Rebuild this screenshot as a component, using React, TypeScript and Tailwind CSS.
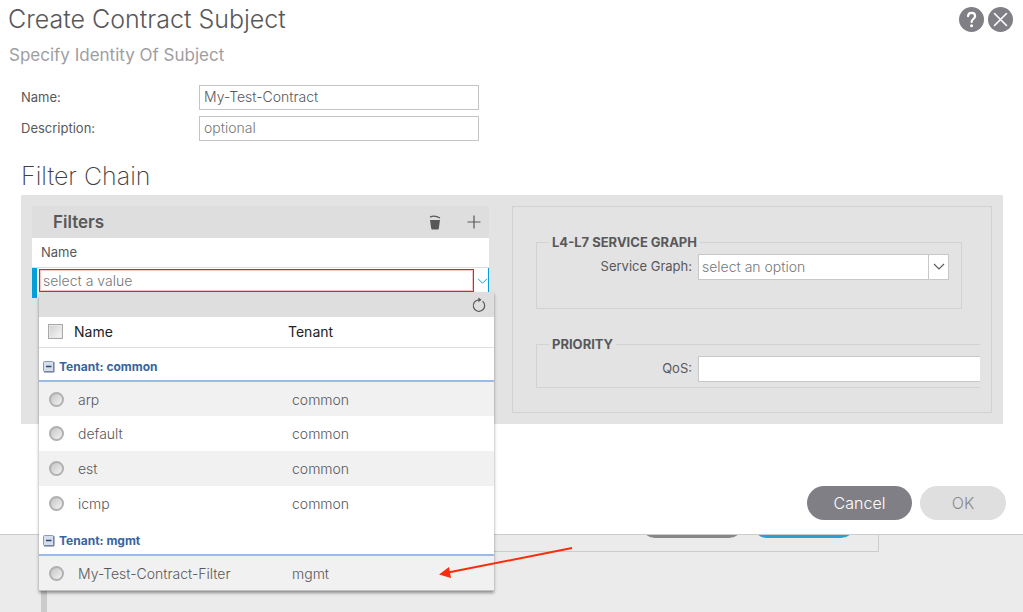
import React, { useState } from 'react';

interface FilterItem {
    name: string;
    tenant: string;
}

interface FilterGroup {
    tenant: string;
    items: FilterItem[];
}

const filterGroups: FilterGroup[] = [
    {
        tenant: "common",
        items: [
            { name: "arp", tenant: "common" },
            { name: "default", tenant: "common" },
            { name: "est", tenant: "common" },
            { name: "icmp", tenant: "common" },
        ],
    },
    {
        tenant: "mgmt",
        items: [{ name: "My-Test-Contract-Filter", tenant: "mgmt" }],
    },
];

const Chevron = ({ className }: { className: string }) => (
    <svg viewBox="0 0 12 8" fill="none" stroke="currentColor" strokeWidth="1.1" className={className}>
        <path d="M1 1l5 5 5-5" />
    </svg>
);

const DialogHeader = () => (
    <header className="flex items-start justify-between pl-2 pr-[10px] pt-1">
        <div>
            <h1 className="text-[25px] leading-[30px] font-light text-[#58585b]">Create Contract Subject</h1>
            <p className="mt-[10px] pl-px text-[17px] leading-[22px] text-[#9e9ea2]">Specify Identity Of Subject</p>
        </div>
        <div className="flex gap-1 pt-[3px]">
            <button type="button" aria-label="Help" className="h-[25px] w-[25px]">
                <svg viewBox="0 0 25 25" fill="none" className="h-full w-full">
                    <circle cx="12.5" cy="12.5" r="12.5" fill="#807f85" />
                    <path d="M9 9.2c.2-2.2 1.6-3.3 3.6-3.3s3.5 1.2 3.5 3.2c0 2.9-3.5 2.9-3.5 5.9" stroke="#fff" strokeWidth="2.2" strokeLinecap="round" />
                    <circle cx="12.6" cy="18.8" r="1.5" fill="#fff" />
                </svg>
            </button>
            <button type="button" aria-label="Close" className="h-[25px] w-[25px]">
                <svg viewBox="0 0 25 25" fill="none" className="h-full w-full">
                    <circle cx="12.5" cy="12.5" r="12.5" fill="#807f85" />
                    <path d="M6.5 6.5l12 12M18.5 6.5l-12 12" stroke="#fff" strokeWidth="1.6" strokeLinecap="round" />
                </svg>
            </button>
        </div>
    </header>
);

const IdentityForm = () => (
    <div className="mt-[19px] flex flex-col gap-[6px] pl-[21px] text-[13px] text-[#58585b]">
        <div className="flex items-center">
            <label htmlFor="subject-name" className="w-[178px]">Name:</label>
            <input id="subject-name" type="text" defaultValue="My-Test-Contract" className="h-[25px] w-[280px] border border-[#c4c4c4] bg-white px-1 pb-[2px] text-[14px] font-light" />
        </div>
        <div className="flex items-center">
            <label htmlFor="subject-description" className="w-[178px]">Description:</label>
            <input id="subject-description" type="text" placeholder="optional" className="h-[25px] w-[280px] border border-[#c4c4c4] bg-white px-1 pb-[2px] text-[14px] font-light placeholder:text-[#77777a]" />
        </div>
    </div>
);

const FilterDropdown = () => {
    const [selected, setSelected] = useState<string>("");

    return (
        <div className="absolute left-[7px] -right-[5px] top-6 z-10 border-b border-[#c0c0c0] bg-white shadow-[0_2px_3px_rgba(0,0,0,0.4)]">
            <div className="flex h-[25px] items-center justify-end bg-[#dedede] pr-[7px]">
                <button type="button" aria-label="Refresh" className="h-4 w-4 text-[#58585b]">
                    <svg viewBox="0 0 16 16" fill="none" stroke="currentColor" strokeWidth="1.2" className="h-full w-full">
                        <path d="M11.6 4.2A5.7 5.7 0 1 1 8 2.9" />
                        <path d="M7.4.4l3.2 2.3-3.2 2.5z" fill="currentColor" stroke="none" />
                    </svg>
                </button>
            </div>
            <table className="w-full table-fixed border-collapse text-left text-[14px] font-light text-[#58585b]">
                <colgroup>
                    <col className="w-[33px]" />
                    <col className="w-[214px]" />
                    <col />
                </colgroup>
                <thead>
                    <tr className="h-[30px] border-b border-[#dedede] text-[#222222]">
                        <th className="pl-[9px]">
                            <input type="checkbox" aria-label="Select all" className="block h-[15px] w-[15px] appearance-none border border-[#a8a8a8] bg-gradient-to-br from-[#cfcfcf] to-[#f8f8f8] ring-1 ring-inset ring-[#e8e8e8]" />
                        </th>
                        <th className="pl-[2px] font-normal">Name</th>
                        <th className="pl-[2px] font-normal">Tenant</th>
                    </tr>
                </thead>
                {filterGroups.map((group) => (
                    <tbody key={group.tenant}>
                        <tr className="h-[34px] border-b-2 border-[#99bbe8]">
                            <th colSpan={3} className="pl-1 pt-[6px] text-[12px] font-bold text-[#3764a0]">
                                <button type="button" className="flex items-center gap-1">
                                    <svg viewBox="0 0 12 12" className="h-3 w-3">
                                        <rect x="0.5" y="0.5" width="10" height="10" rx="1" fill="#d5dfec" stroke="#8d9bb0" />
                                        <path d="M1 11h10V1" fill="none" stroke="#5b6f8e" />
                                        <path d="M3 5.5h5.5" stroke="#2c466e" strokeWidth="1.5" />
                                    </svg>
                                    Tenant: {group.tenant}
                                </button>
                            </th>
                        </tr>
                        {group.items.map((item) => (
                            <tr key={item.name} className="h-[35px] odd:bg-white even:bg-[#f1f1f1]">
                                <td className="pl-[10px]">
                                    <input
                                        type="radio"
                                        name="filter"
                                        id={`filter-${item.name}`}
                                        checked={selected === item.name}
                                        onChange={() => setSelected(item.name)}
                                        className="block h-[15px] w-[15px] appearance-none rounded-full border-2 border-[#b0b0b0] bg-gradient-to-br from-[#c4c4c4] to-[#f4f4f4] checked:to-[#3764a0]"
                                    />
                                </td>
                                <td className="pl-[6px]">
                                    <label htmlFor={`filter-${item.name}`}>{item.name}</label>
                                </td>
                                <td className="pl-[6px]">{item.tenant}</td>
                            </tr>
                        ))}
                    </tbody>
                ))}
            </table>
            {/* callout arrow on the contract filter row */}
            <svg viewBox="0 0 134 34" fill="none" className="pointer-events-none absolute left-[400px] top-[254px] h-[34px] w-[134px]">
                <path d="M133 2L9 26.5" stroke="#fb2c0b" strokeWidth="2" />
                <path d="M0 28.5L10 21l2 11z" fill="#fb2c0b" />
            </svg>
        </div>
    );
};

const FiltersGrid = () => (
    <section className="self-start text-[#58585b]">
        <div className="flex h-8 items-center bg-[#dedede] pl-[21px] pr-2">
            <h3 className="flex-1 pt-px text-[17px] font-semibold">Filters</h3>
            <div className="flex items-center gap-[26px]">
                <button type="button" aria-label="Delete filter" className="h-[15px] w-[12px]">
                    <svg viewBox="0 0 12 15" fill="currentColor" className="h-full w-full">
                        <path d="M1 5h10l-1.2 8.6c-.1.6-.5.9-1 .9H3.2c-.5 0-.9-.3-1-.9z" />
                        <path d="M1 2.1C4 .7 7.800 1.200 11 3" fill="none" stroke="currentColor" strokeWidth="1.3" />
                    </svg>
                </button>
                <button type="button" aria-label="Add filter" className="h-[14px] w-[14px]">
                    <svg viewBox="0 0 14 14" stroke="currentColor" strokeWidth="1.2" className="h-full w-full">
                        <path d="M7 .5v13M.5 7h13" />
                    </svg>
                </button>
            </div>
        </div>
        <div className="flex h-[30px] items-center border-b border-[#dedede] bg-white pl-[9px] text-[13px]">Name</div>
        <div className="relative flex h-[30px] items-start border-r border-l-[5px] border-[#049fd9] bg-white pl-[2px] pt-px">
            <input type="text" aria-label="Filter name" placeholder="select a value" className="h-[23px] min-w-0 flex-1 border border-[#d62536] bg-white px-[3px] text-[14px] font-light ring-1 ring-inset ring-[#f3c4c8] placeholder:text-[#77777a]" />
            <button type="button" aria-label="Open filter list" className="flex h-6 w-[14px] items-center justify-end text-[#049fd9]">
                <Chevron className="h-[7px] w-[11px]" />
            </button>
        </div>
        <div className="relative -mt-[30px]">
            <FilterDropdown />
        </div>
    </section>
);

const ServiceSettings = () => (
    <section className="h-[207px] border border-[#d2d2d2] pl-[23px] pr-[11px] pt-[27px] text-[13px] text-[#58585b]">
        <fieldset className="mr-[18px] h-[75px] border border-[#d2d2d2] px-3">
            <legend className="px-[3px] text-[13px] leading-4 font-bold">L4-L7 SERVICE GRAPH</legend>
            <div className="flex items-center gap-[6px] pt-1">
                <label htmlFor="service-graph" className="w-[143px] text-right">Service Graph:</label>
                <div className="relative flex-1">
                    <select id="service-graph" className="block h-[26px] w-full appearance-none border border-[#c8c8c8] bg-white px-[3px] pb-[2px] text-[14px] font-light text-[#77777a]">
                        <option>select an option</option>
                    </select>
                    <span className="pointer-events-none absolute inset-y-0 right-0 flex w-[21px] items-center justify-center border border-[#c8c8c8]">
                        <Chevron className="h-[8px] w-[12px]" />
                    </span>
                </div>
            </div>
        </fieldset>
        <fieldset className="mt-[27px] h-[52px] border border-r-0 border-[#d2d2d2] pl-3">
            <legend className="px-[3px] text-[13px] leading-4 font-bold">PRIORITY</legend>
            <div className="flex items-center gap-[6px] pt-1">
                <label htmlFor="qos" className="w-[143px] text-right">QoS:</label>
                <select id="qos" className="block h-[26px] min-w-0 flex-1 appearance-none border border-r-0 border-[#c8c8c8] bg-white px-[3px]">
                    <option></option>
                </select>
            </div>
        </fieldset>
    </section>
);

const App: React.FC = () => {
    return (
        <div className="flex min-h-screen flex-col overflow-hidden bg-[#ebebeb] font-['Inter','Liberation_Sans',sans-serif]">
            <main className="relative border-b border-[#cccccc] bg-white pb-[14px]">
                <DialogHeader />
                <IdentityForm />
                <h2 className="mt-5 pl-[21px] text-[25px] leading-[30px] font-extralight text-[#404043]">Filter Chain</h2>
                <div className="ml-[21px] mr-5 mt-1 grid grid-cols-[457fr_480fr] gap-[23px] bg-[#e3e3e3] p-[11px]">
                    <FiltersGrid />
                    <ServiceSettings />
                </div>
                <div className="mt-[62px] flex justify-end gap-2 pr-[17px] text-[16px] font-light">
                    <button type="button" className="h-[34px] w-[105px] rounded-full bg-[#807f85] text-white">Cancel</button>
                    <button type="button" disabled className="h-[34px] w-[86px] rounded-full bg-[#dfdfdf] text-[#88888b]">OK</button>
                </div>
            </main>
            {/* page that lies behind the dialog */}
            <div className="flex flex-1 flex-col pl-[41px]">
                <div className="flex-1 border-l-[6px] border-[#cbcbcb]">
                    <div className="mr-[144px] h-[17px] border-r border-b border-[#cccccc] pr-[23px]">
                        <div className="flex h-[3px] items-end justify-end gap-[10px] overflow-hidden" aria-hidden="true">
                            <span className="h-7 w-[102px] shrink-0 rounded-full bg-[#87878a]"></span>
                            <span className="h-7 w-[102px] shrink-0 rounded-full bg-[#2a9fd4]"></span>
                        </div>
                    </div>
                </div>
            </div>
        </div>
    );
};

export default App;
